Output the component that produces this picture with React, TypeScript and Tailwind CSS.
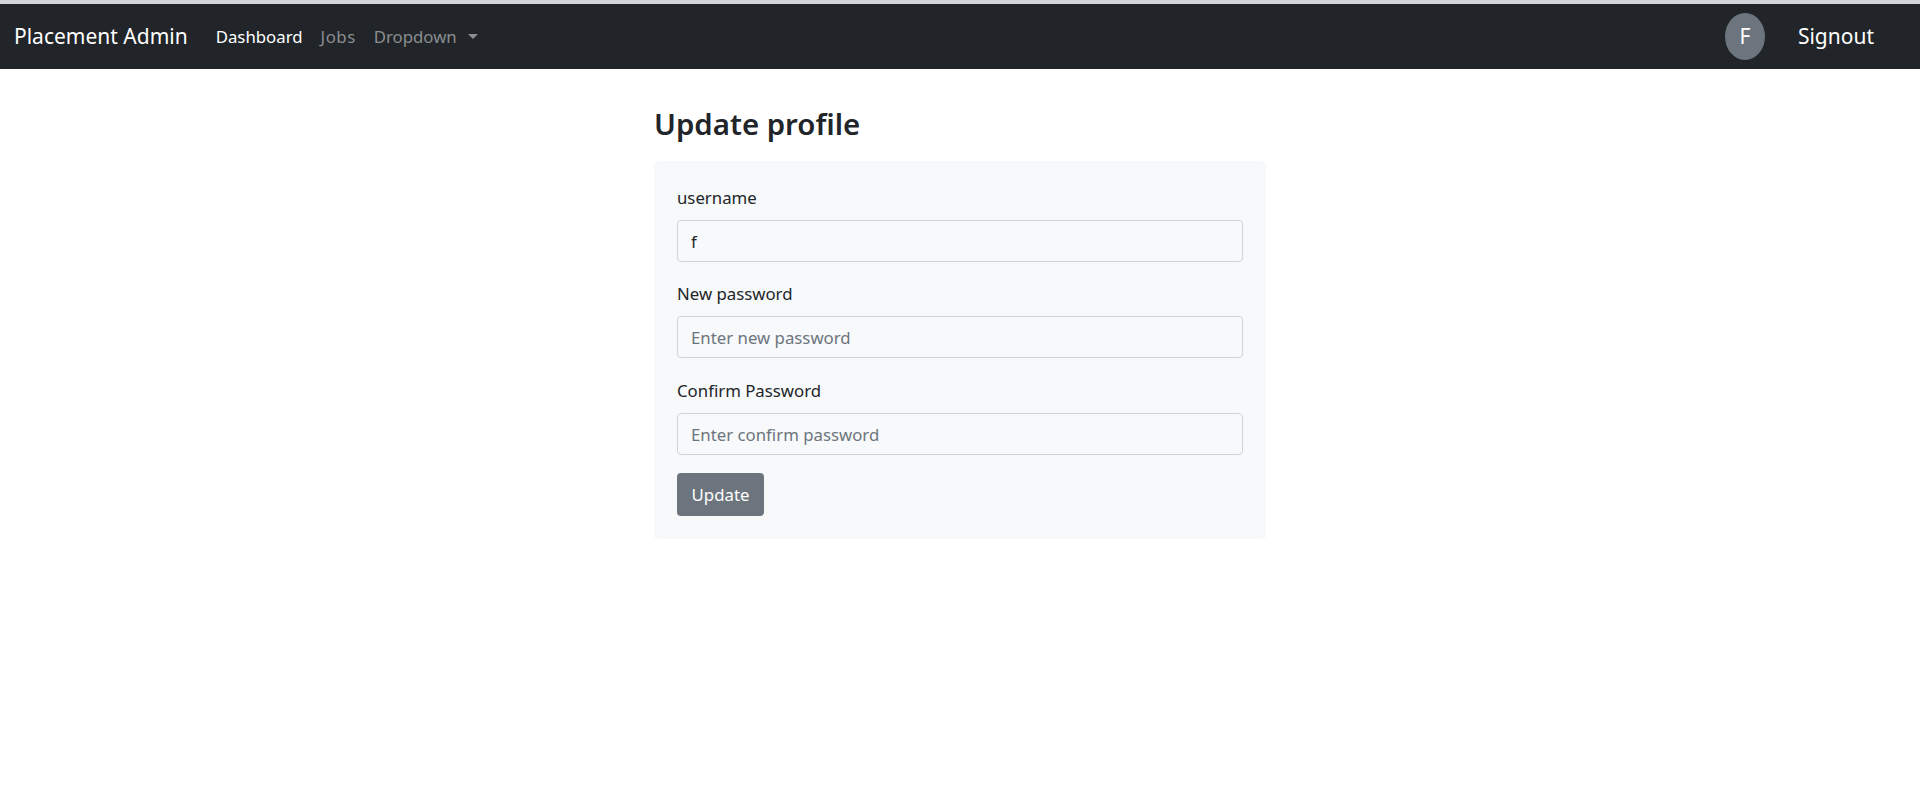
export default function App() {
  const font = { fontFamily: '"Noto Sans", sans-serif' };
  return (
    <div className="min-h-[808px] bg-white text-[#212529]" style={font}>
      <div className="h-[4px] bg-[#d3d5d9]" />
      <nav className="h-[65px] bg-[#212529] flex items-center pl-[14px]">
        <a className="text-[21px] text-white mr-[28px]">Placement Admin</a>
        <a className="text-[16.8px] text-white mr-[18px]">Dashboard</a>
        <a className="text-[16.8px] text-[#8b8d90] mr-[18px] tracking-[0.5px]">Jobs</a>
        <a className="text-[16.8px] text-[#8b8d90] flex items-center">
          Dropdown
          <span className="ml-[11px] w-0 h-0 border-x-[5px] border-x-transparent border-t-[5px] border-t-[#8b8d90]" />
        </a>
        <div className="ml-auto flex items-center">
          <div className="w-[40px] h-[47px] rounded-[50%] bg-[#6c757d] text-white text-[21px] flex items-center justify-center">F</div>
          <a className="ml-[33px] mr-[46px] text-[21px] text-white">Signout</a>
        </div>
      </nav>
      <main className="w-[612px] mx-auto">
        <h3 className="h-[92px] flex items-center pt-[20px] text-[29.4px] font-semibold leading-none">Update profile</h3>
        <form className="bg-[#f8f9fa] rounded-[4px] px-[23px] pt-[23px] pb-[23px] text-[16.8px]">
          <div className="mb-[18px]">
            <label className="block h-[27px] mb-[9px] leading-[27px]">username</label>
            <input readOnly value="f" className="block w-full h-[42px] px-[13px] border border-[#ced4da] rounded-[4px] bg-[#f8f9fa] text-[#212529] outline-none" />
          </div>
          <div className="mb-[19px]">
            <label className="block h-[27px] mb-[9px] leading-[27px]">New password</label>
            <input placeholder="Enter new password" className="block w-full h-[42px] px-[13px] border border-[#ced4da] rounded-[4px] bg-[#f8f9fa] placeholder:text-[#6c757d] outline-none" />
          </div>
          <div className="mb-[18px]">
            <label className="block h-[27px] mb-[9px] leading-[27px]">Confirm Password</label>
            <input placeholder="Enter confirm password" className="block w-full h-[42px] px-[13px] border border-[#ced4da] rounded-[4px] bg-[#f8f9fa] placeholder:text-[#6c757d] outline-none" />
          </div>
          <button type="button" className="block w-[87px] h-[43px] bg-[#6c757d] text-white rounded-[4px]">Update</button>
        </form>
      </main>
    </div>
  );
}
